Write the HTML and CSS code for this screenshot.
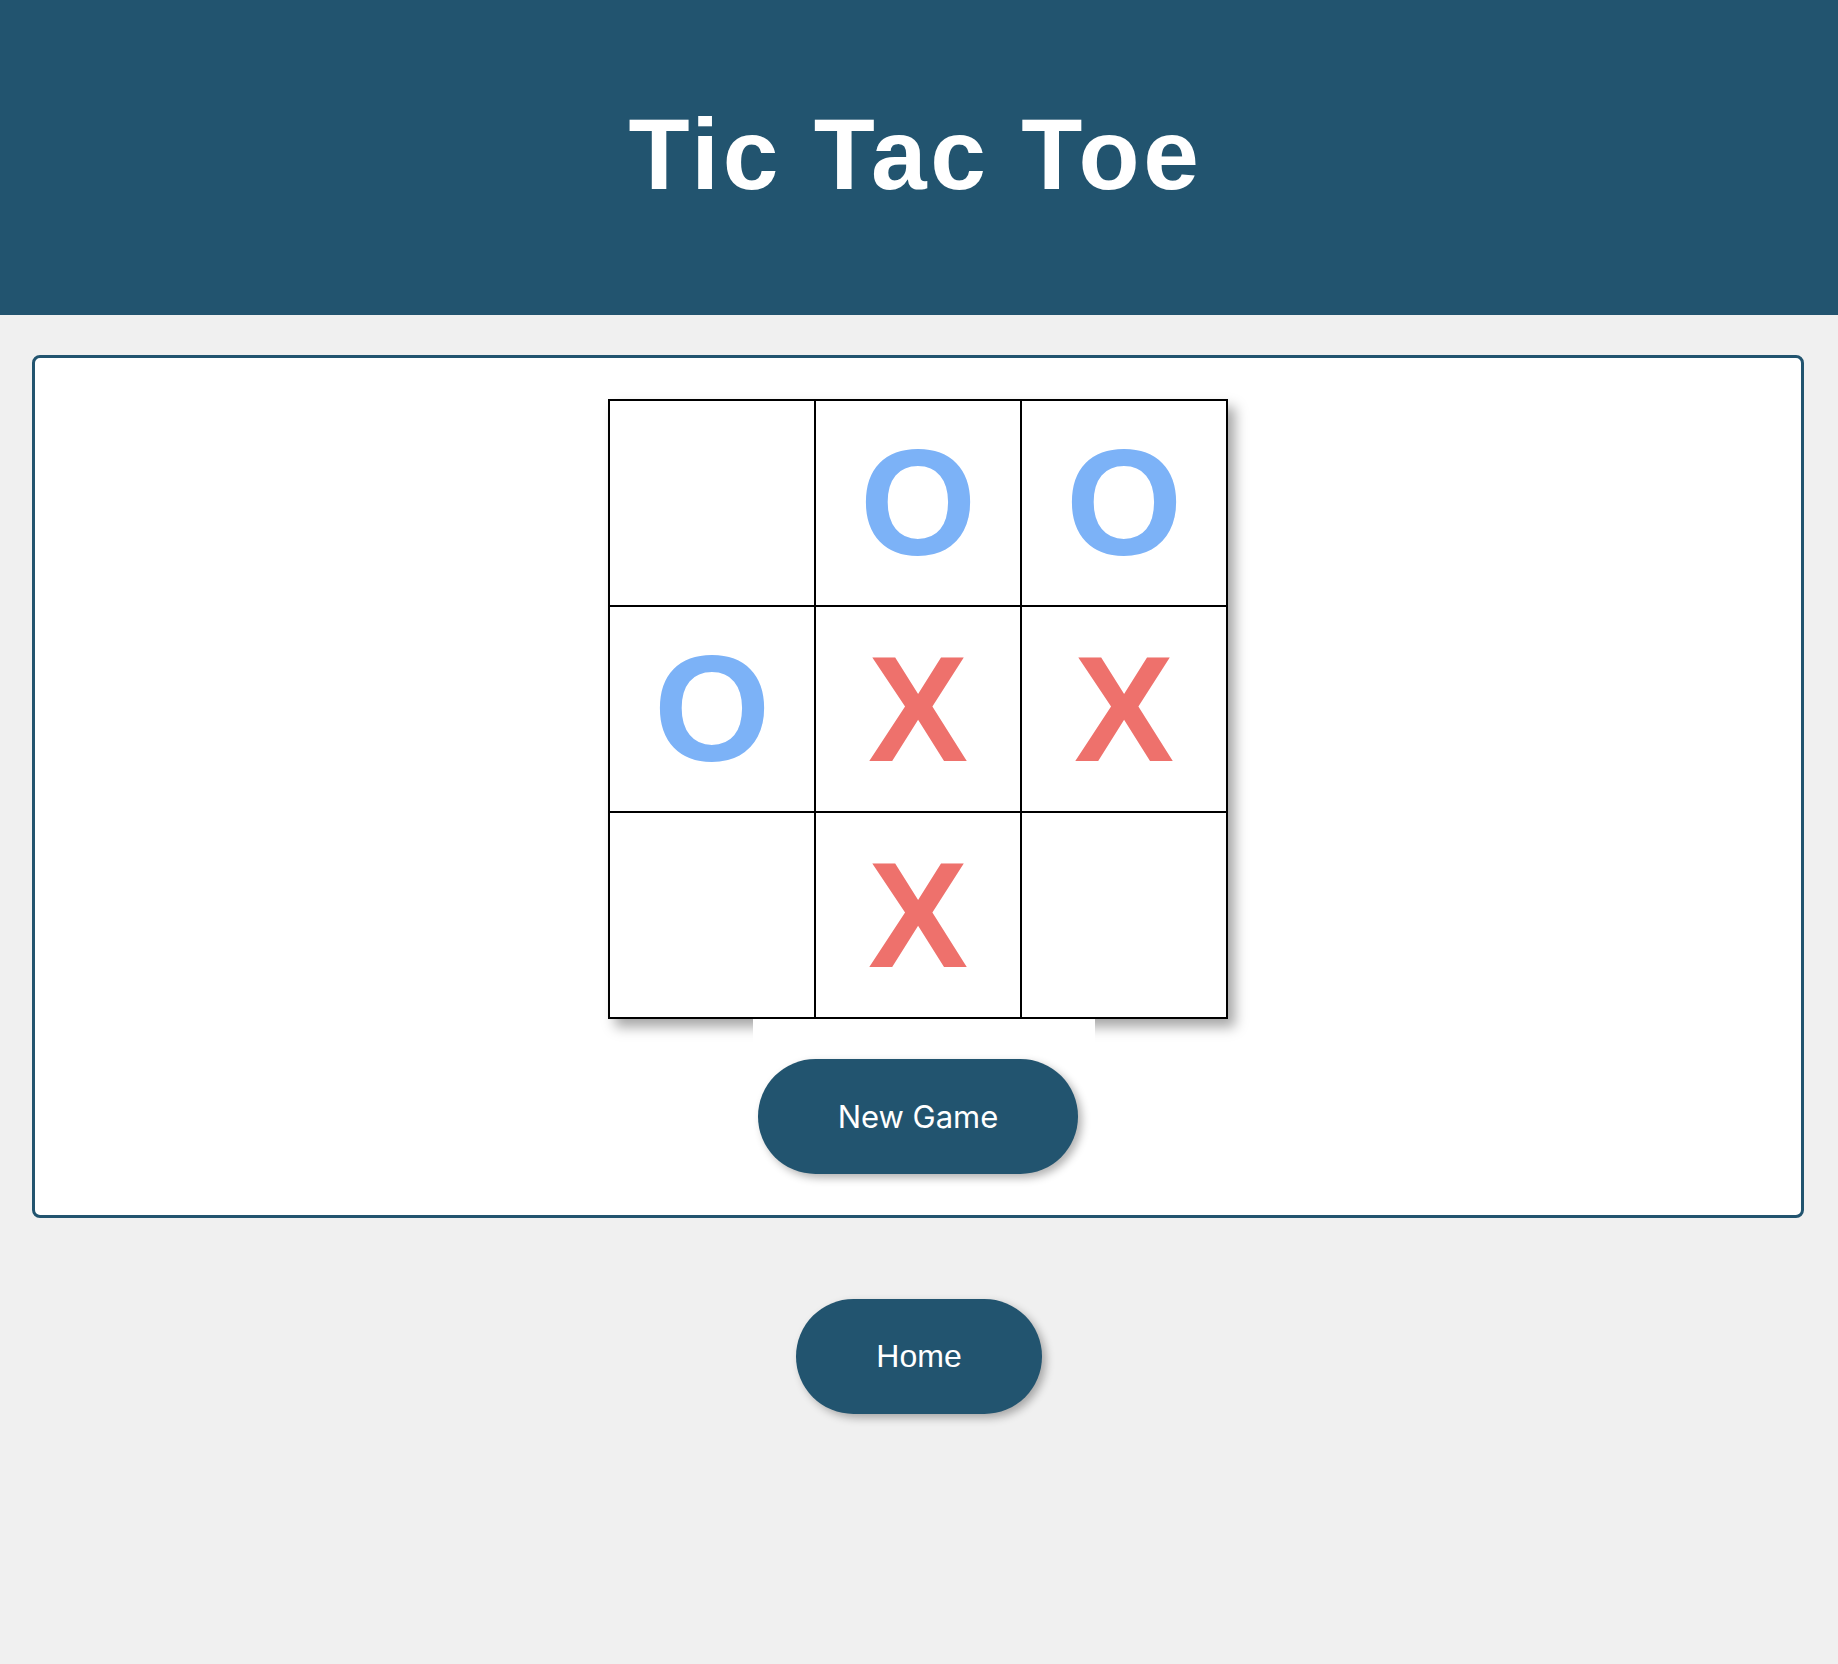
FILE: index.html
```html
<!DOCTYPE html>
<html lang="en">
<head>
<meta charset="utf-8">
<title>Tic Tac Toe</title>
<link rel="stylesheet" href="styles.css">
</head>
<body>
<header class="site-header">
  <h1 class="title">Tic Tac Toe</h1>
</header>
<main class="game-card">
  <div class="board">
    <div class="cell"></div>
    <div class="cell o">O</div>
    <div class="cell o">O</div>
    <div class="cell o">O</div>
    <div class="cell x">X</div>
    <div class="cell x">X</div>
    <div class="cell"></div>
    <div class="cell x">X</div>
    <div class="cell"></div>
  </div>
  <div class="actions">
    <button class="btn btn-new" type="button">New Game</button>
  </div>
</main>
<nav class="home-row">
  <a class="btn btn-home" href="#">Home</a>
</nav>
</body>
</html>
```
FILE: styles.css
```css
html, body {
  margin: 0;
  padding: 0;
}
body {
  background: #f0f0f0;
  font-family: "Liberation Sans", Arial, Helvetica, sans-serif;
  min-height: 1664px;
}
.site-header {
  background: #22546f;
  height: 315px;
  box-sizing: border-box;
  display: flex;
  align-items: center;
  justify-content: center;
  padding: 0 7px 6px 0;
}
.title {
  margin: 0;
  color: #ffffff;
  font-size: 100px;
  font-weight: 700;
  letter-spacing: 3.7px;
  line-height: normal;
}
.game-card {
  margin: 40px 34px 0 32px;
  background: #ffffff;
  border: 3px solid #22546f;
  border-radius: 8px;
  padding: 41px 0 41px;
  display: flex;
  flex-direction: column;
  align-items: center;
}
.board {
  display: grid;
  grid-template-columns: repeat(3, 204px);
  grid-template-rows: repeat(3, 204px);
  gap: 2px;
  border: 2px solid #000;
  background: #000;
  box-shadow: 7px 8px 12px rgba(0, 0, 0, 0.35);
}
.cell {
  background: #ffffff;
  display: flex;
  align-items: center;
  justify-content: center;
  font-family: "Liberation Sans", Arial, Helvetica, sans-serif;
  font-weight: 700;
  font-size: 150px;
  line-height: 1;
}
.cell.o { color: #7cb2f7; }
.cell.x { color: #ee716c; }
.actions {
  background: #ffffff;
  padding: 40px 17px 0 5px;
  margin-left: 12px;
}
.btn {
  box-sizing: border-box;
  display: inline-flex;
  align-items: center;
  justify-content: center;
  height: 115px;
  padding: 0 80px;
  border: none;
  border-radius: 58px;
  background: #22546f;
  color: #ffffff;
  text-decoration: none;
  box-shadow: 4px 4px 8px rgba(0, 0, 0, 0.3);
  cursor: pointer;
}
.btn-new {
  font-family: Inter, "Noto Sans", sans-serif;
  font-size: 31px;
  font-weight: 400;
}
.btn-home {
  font-family: "Liberation Sans", Arial, Helvetica, sans-serif;
  font-size: 32px;
}
.home-row {
  display: flex;
  justify-content: center;
  margin-top: 81px;
}
```
